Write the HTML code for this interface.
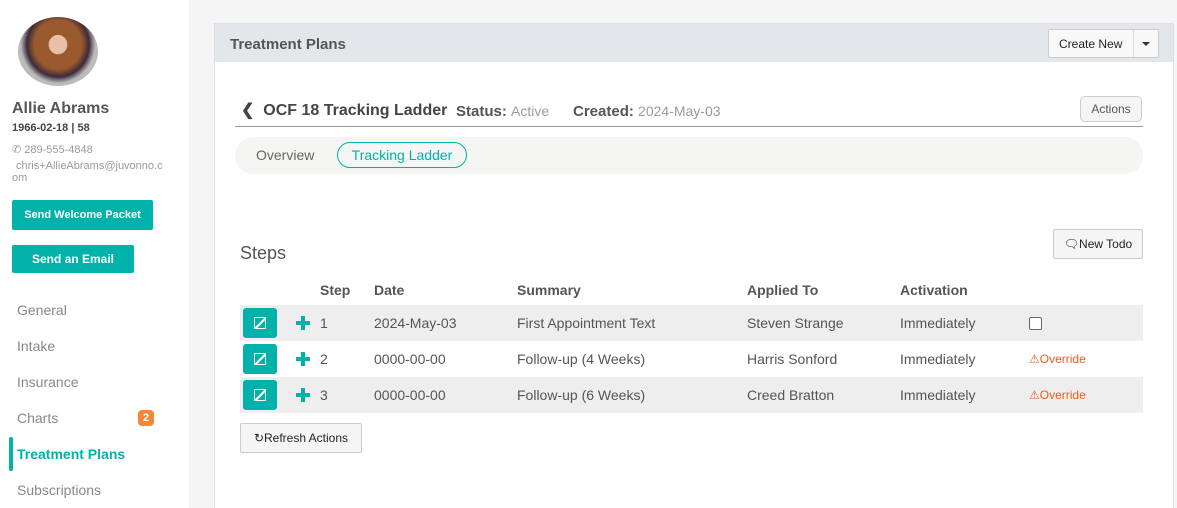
<!DOCTYPE html>
<html><head><style>
*{box-sizing:border-box;margin:0;padding:0}
html,body{width:1177px;height:508px;overflow:hidden}
body{background:#f5f5f5;font-family:"Liberation Sans",sans-serif;position:relative;color:#555}
.a{position:absolute;white-space:nowrap}
#side{position:absolute;left:0;top:0;width:189px;height:508px;background:#fff}
.btn{position:absolute;background:#00b2a9;color:#fff;font-weight:bold;font-size:12px;border-radius:2px;text-align:center}
.nav{position:absolute;left:17px;font-size:14px;color:#888}
#panel{position:absolute;left:214px;top:23px;width:960px;height:485px;background:#fff;border:1px solid #dde;border-bottom:none}
.row{position:absolute;left:240px;width:903px;height:36px}
.row.g{background:#eee}
.ib{position:absolute;left:3px;top:3px;width:34px;height:30px;background:#00b2a9;border-radius:3px}
.ib:after{content:"";position:absolute;left:11px;top:9px;width:10px;height:10px;border:1.5px solid #fff;background:linear-gradient(135deg,#00b2a9 45%,#fff 46% 60%,#00b2a9 61%)}
.td{position:absolute;top:10px;font-size:14px;color:#555}
.pl{position:absolute;left:56px;top:11px;width:14px;height:14px}
.pl:before{content:"";position:absolute;left:5px;top:0;width:4px;height:14px;background:#00b2a9}
.pl:after{content:"";position:absolute;left:0;top:5px;width:14px;height:4px;background:#00b2a9}
.ov{position:absolute;top:11px;left:789px;font-size:12px;color:#f05a1a}
.gb{position:absolute;background:#f5f5f5;border:1px solid #ccc;border-radius:2px;font-size:12px;color:#222;text-align:center}
</style></head><body>
<div id="side">
 <div class="a" style="left:18px;top:17px;width:80px;height:69px;border-radius:50%;background:radial-gradient(ellipse at 50% 40%,#e8c0a8 0 16%,#9a5a2e 17% 42%,#3d2a3a 55%,#bbb 66%)"></div>
 <div class="a" style="left:12px;top:100px;font-size:16px;font-weight:bold;color:#555">Allie Abrams</div>
 <div class="a" style="left:12px;top:122px;font-size:11px;font-weight:bold;color:#444">1966-02-18 | 58</div>
 <div class="a" style="left:12px;top:143px;font-size:11px;color:#999">&#9990; 289-555-4848</div>
 <div class="a" style="left:16px;top:160px;font-size:11px;color:#999;line-height:12px">chris+AllieAbrams@juvonno.c<br><span style="margin-left:-4px">om</span></div>
 <div class="btn" style="left:12px;top:200px;width:141px;height:30px;line-height:30px;font-size:11px">Send Welcome Packet</div>
 <div class="btn" style="left:12px;top:245px;width:122px;height:28px;line-height:28px">Send an Email</div>
 <div class="nav" style="top:302px">General</div>
 <div class="nav" style="top:338px">Intake</div>
 <div class="nav" style="top:374px">Insurance</div>
 <div class="nav" style="top:410px">Charts</div>
 <div class="a" style="left:138px;top:410px;width:16px;height:16px;border-radius:4px;background:#f5863a;color:#fff;font-size:11px;font-weight:bold;text-align:center;line-height:16px">2</div>
 <div class="a" style="left:9px;top:437px;width:4px;height:34px;background:#00b2a9;border-radius:2px"></div>
 <div class="nav" style="top:446px;color:#00b2a9;font-weight:bold">Treatment Plans</div>
 <div class="nav" style="top:482px">Subscriptions</div>
</div>
<div id="panel">
 <div class="a" style="left:0;top:0;width:958px;height:38px;background:#e4e7ea"></div>
 <div class="a" style="left:15px;top:12px;font-size:15px;font-weight:bold;color:#555">Treatment Plans</div>
 <div class="gb" style="left:833px;top:5px;width:111px;height:29px;background:#f8f8f8;text-align:left">
  <span class="a" style="left:10px;top:7px">Create New</span>
  <span class="a" style="left:84px;top:0;width:1px;height:27px;background:#ddd"></span>
  <span class="a" style="left:93px;top:12px;border:4px solid transparent;border-top:4px solid #333"></span>
 </div>
</div>
<div class="a" style="left:241px;top:100px;font-size:16px;font-weight:bold;color:#444">&#10094;&nbsp; OCF 18 Tracking Ladder</div>
<div class="a" style="left:456px;top:103px;font-size:15px;font-weight:bold;color:#555">Status: <span style="font-weight:normal;font-size:14px;color:#99a">Active</span></div>
<div class="a" style="left:573px;top:103px;font-size:15px;font-weight:bold;color:#555">Created: <span style="font-weight:normal;font-size:14px;color:#99a">2024-May-03</span></div>
<div class="gb" style="left:1080px;top:96px;width:62px;height:26px;line-height:24px;border-radius:5px;color:#555">Actions</div>
<div class="a" style="left:235px;top:126px;width:908px;height:1px;background:#999"></div>
<div class="a" style="left:235px;top:137px;width:908px;height:37px;border-radius:18px;background:#f5f5f3"></div>
<div class="a" style="left:256px;top:147px;font-size:14px;color:#666">Overview</div>
<div class="a" style="left:337px;top:142px;width:130px;height:26px;border:1px solid #00b2a9;border-radius:13px;color:#00b2a9;font-size:14px;text-align:center;line-height:24px">Tracking Ladder</div>
<div class="a" style="left:240px;top:243px;font-size:18px;color:#555">Steps</div>
<div class="gb" style="left:1053px;top:229px;width:90px;height:30px;line-height:28px">&#128488;New Todo</div>
<div class="a" style="left:320px;top:282px;font-size:14px;font-weight:bold;color:#555">Step</div>
<div class="a" style="left:374px;top:282px;font-size:14px;font-weight:bold;color:#555">Date</div>
<div class="a" style="left:517px;top:282px;font-size:14px;font-weight:bold;color:#555">Summary</div>
<div class="a" style="left:747px;top:282px;font-size:14px;font-weight:bold;color:#555">Applied To</div>
<div class="a" style="left:900px;top:282px;font-size:14px;font-weight:bold;color:#555">Activation</div>
<div class="row g" style="top:305px"><div class="ib"></div><div class="pl"></div><div class="td" style="left:80px">1</div><div class="td" style="left:134px">2024-May-03</div><div class="td" style="left:277px">First Appointment Text</div><div class="td" style="left:507px">Steven Strange</div><div class="td" style="left:660px">Immediately</div><div class="a" style="left:789px;top:12px;width:13px;height:13px;border:1px solid #666;border-radius:2px;background:#fff"></div></div>
<div class="row" style="top:341px"><div class="ib"></div><div class="pl"></div><div class="td" style="left:80px">2</div><div class="td" style="left:134px">0000-00-00</div><div class="td" style="left:277px">Follow-up (4 Weeks)</div><div class="td" style="left:507px">Harris Sonford</div><div class="td" style="left:660px">Immediately</div><div class="ov">&#9888;Override</div></div>
<div class="row g" style="top:377px"><div class="ib"></div><div class="pl"></div><div class="td" style="left:80px">3</div><div class="td" style="left:134px">0000-00-00</div><div class="td" style="left:277px">Follow-up (6 Weeks)</div><div class="td" style="left:507px">Creed Bratton</div><div class="td" style="left:660px">Immediately</div><div class="ov">&#9888;Override</div></div>
<div class="gb" style="left:240px;top:423px;width:122px;height:30px;line-height:28px">&#8635;Refresh Actions</div>
</body></html>
